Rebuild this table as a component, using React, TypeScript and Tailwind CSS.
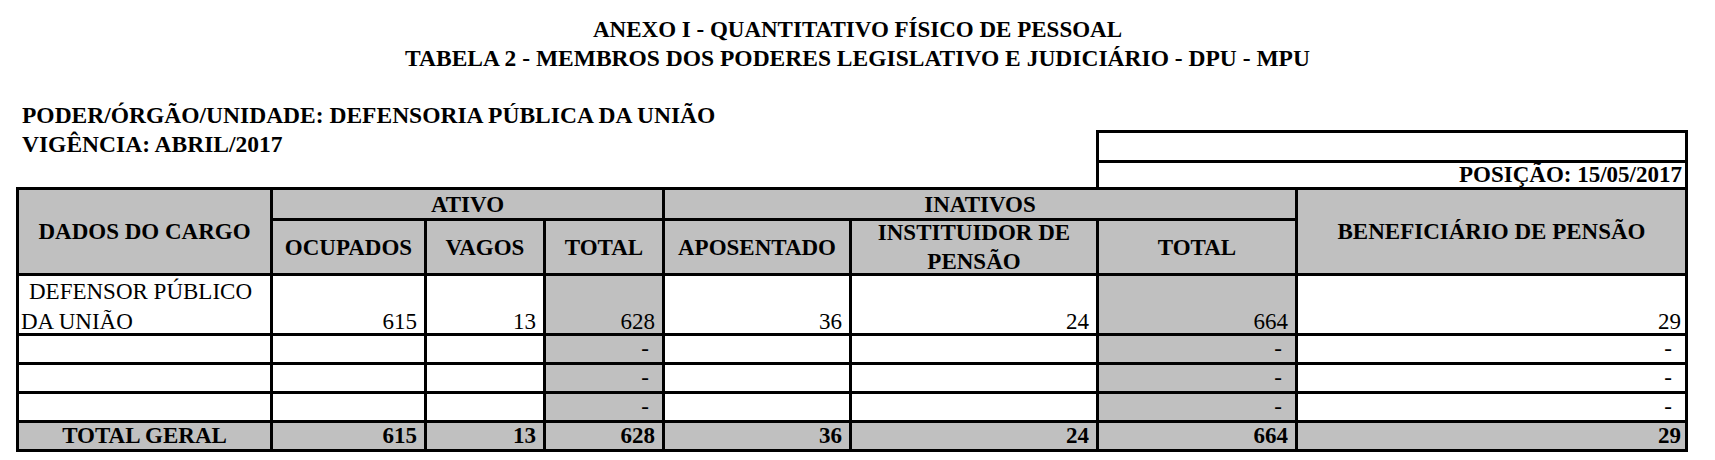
import React from "react";

const gray = "bg-[#c0c0c0]";

function HeadCell({ children, className = "" }: { children: React.ReactNode; className?: string }) {
  return (
    <div className={`${gray} flex items-center justify-center text-center font-bold leading-[29px] ${className}`}>
      <div>{children}</div>
    </div>
  );
}

function NumCell({
  value,
  grayBg = false,
  bold = false,
  big = false,
  last = false,
}: {
  value: string;
  grayBg?: boolean;
  bold?: boolean;
  big?: boolean;
  last?: boolean;
}) {
  const isDash = value === "-";
  const pad = isDash ? "pr-[13px]" : last ? "pr-[4px]" : "pr-[7px]";
  return (
    <div
      className={`${grayBg ? gray : "bg-white"} flex items-end justify-end leading-[26px] ${pad} ${bold ? "font-bold" : ""}`}
    >
      <span className={big ? "-mb-[2px]" : ""}>{value}</span>
    </div>
  );
}

export default function App() {
  const emptyRows = [0, 1, 2];
  return (
    <div className="w-[1715px] h-[460px] bg-white text-black font-['Liberation_Serif','Times_New_Roman',serif] text-[23px] overflow-hidden">
      <div className="pt-[16px] text-center font-bold leading-[28px]">
        <div>ANEXO I - QUANTITATIVO FÍSICO DE PESSOAL</div>
        <div className="text-[23.5px]">TABELA 2 - MEMBROS DOS PODERES LEGISLATIVO E JUDICIÁRIO - DPU - MPU</div>
      </div>

      <div className="mt-[29px] h-[86px] flex justify-between pl-[16px] pr-[27px]">
        <div className="self-start pl-[6px] font-bold leading-[29px] text-[23.5px]">
          <div>PODER/ÓRGÃO/UNIDADE: DEFENSORIA PÚBLICA DA UNIÃO</div>
          <div>VIGÊNCIA: ABRIL/2017</div>
        </div>
        <div className="self-end w-[592px] border-[3px] border-b-0 border-black">
          <div className="h-[27px]"></div>
          <div className="h-[24px] border-t-[3px] border-black box-content flex justify-end pr-[3px] font-bold leading-[24px]">
            POSIÇÃO: 15/05/2017
          </div>
        </div>
      </div>

      <div className="ml-[16px] w-[1672px] grid grid-cols-[251px_151px_116px_116px_184px_244px_196px_387px] grid-rows-[28px_52px_57px_26px_26px_26px_26px] gap-[3px] p-[3px] bg-black">
        <HeadCell className="row-span-2">DADOS DO CARGO</HeadCell>
        <HeadCell className="col-span-3">ATIVO</HeadCell>
        <HeadCell className="col-span-3">INATIVOS</HeadCell>
        <HeadCell className="row-span-2">BENEFICIÁRIO DE PENSÃO</HeadCell>

        <HeadCell>OCUPADOS</HeadCell>
        <HeadCell>VAGOS</HeadCell>
        <HeadCell>TOTAL</HeadCell>
        <HeadCell>APOSENTADO</HeadCell>
        <HeadCell>
          INSTITUIDOR DE
          <br />
          PENSÃO
        </HeadCell>
        <HeadCell>TOTAL</HeadCell>

        <div className="bg-white flex items-end pl-[2px] leading-[30px]">
          <div className="-mb-[4px]">
            <div className="indent-[8px]">DEFENSOR PÚBLICO</div>
            <div>DA UNIÃO</div>
          </div>
        </div>
        <NumCell value="615" big />
        <NumCell value="13" big />
        <NumCell value="628" big grayBg />
        <NumCell value="36" big />
        <NumCell value="24" big />
        <NumCell value="664" big grayBg />
        <NumCell value="29" big last />

        {emptyRows.map((i) => (
          <React.Fragment key={i}>
            <div className="bg-white"></div>
            <div className="bg-white"></div>
            <div className="bg-white"></div>
            <NumCell value="-" grayBg />
            <div className="bg-white"></div>
            <div className="bg-white"></div>
            <NumCell value="-" grayBg />
            <NumCell value="-" last />
          </React.Fragment>
        ))}

        <div className={`${gray} flex items-end justify-center font-bold leading-[26px]`}>TOTAL GERAL</div>
        <NumCell value="615" grayBg bold />
        <NumCell value="13" grayBg bold />
        <NumCell value="628" grayBg bold />
        <NumCell value="36" grayBg bold />
        <NumCell value="24" grayBg bold />
        <NumCell value="664" grayBg bold />
        <NumCell value="29" grayBg bold last />
      </div>
    </div>
  );
}
